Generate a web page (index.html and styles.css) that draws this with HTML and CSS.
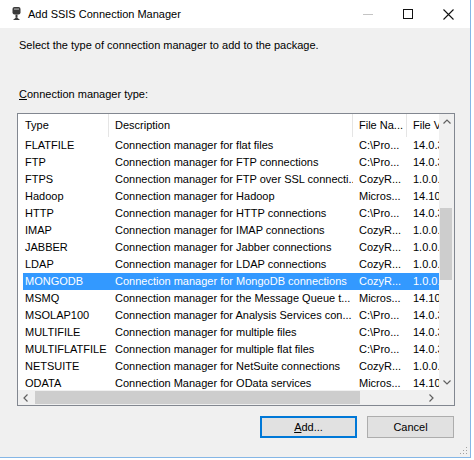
FILE: index.html
```html
<!DOCTYPE html>
<html>
<head>
<meta charset="utf-8">
<title>Add SSIS Connection Manager</title>
<link rel="stylesheet" href="styles.css">
</head>
<body>
<div class="window">
  <div class="titlebar">
    <svg class="app-icon" width="9" height="14" viewBox="0 0 9 14">
      <rect x="0.5" y="0" width="8" height="7.5" rx="2" fill="#3a3a3a"/>
      <rect x="2" y="1.5" width="5" height="1.2" fill="#a8a8a8"/>
      <rect x="3.5" y="7.5" width="2" height="3" fill="#3a3a3a"/>
      <path d="M1 13 L4.5 10 L8 13 Z" fill="#3a3a3a"/>
    </svg>
    <span class="title">Add SSIS Connection Manager</span>
    <div class="controls">
      <span class="ctl"><svg width="10" height="10" viewBox="0 0 10 10"><line x1="0" y1="5.5" x2="10" y2="5.5" stroke="#c4c4c4" stroke-width="1"/></svg></span>
      <span class="ctl"><svg width="10" height="10" viewBox="0 0 10 10"><rect x="0.5" y="0.5" width="9" height="9" fill="none" stroke="#111" stroke-width="1"/></svg></span>
      <span class="ctl"><svg width="11" height="11" viewBox="0 0 11 11"><path d="M0.5 0.5 L10.5 10.5 M10.5 0.5 L0.5 10.5" stroke="#111" stroke-width="1.1" fill="none"/></svg></span>
    </div>
  </div>
  <div class="client">
    <p class="intro">Select the type of connection manager to add to the package.</p>
    <p class="label"><u>C</u>onnection manager type:</p>
    <div class="listbox">
      <div class="listarea">
        <div class="row header">
          <div class="c">Type</div>
          <div class="c">Description</div>
          <div class="c">File Na...</div>
          <div class="c">File V</div>
        </div>
        <div class="row"><div class="c">FLATFILE</div><div class="c">Connection manager for flat files</div><div class="c">C:\Pro...</div><div class="c">14.0.3</div></div>
        <div class="row"><div class="c">FTP</div><div class="c">Connection manager for FTP connections</div><div class="c">C:\Pro...</div><div class="c">14.0.3</div></div>
        <div class="row"><div class="c">FTPS</div><div class="c">Connection manager for FTP over SSL connecti...</div><div class="c">CozyR...</div><div class="c">1.0.0.</div></div>
        <div class="row"><div class="c">Hadoop</div><div class="c">Connection manager for Hadoop</div><div class="c">Micros...</div><div class="c">14.10</div></div>
        <div class="row"><div class="c">HTTP</div><div class="c">Connection manager for HTTP connections</div><div class="c">C:\Pro...</div><div class="c">14.0.3</div></div>
        <div class="row"><div class="c">IMAP</div><div class="c">Connection manager for IMAP connections</div><div class="c">CozyR...</div><div class="c">1.0.0.</div></div>
        <div class="row"><div class="c">JABBER</div><div class="c">Connection manager for Jabber connections</div><div class="c">CozyR...</div><div class="c">1.0.0.</div></div>
        <div class="row"><div class="c">LDAP</div><div class="c">Connection manager for LDAP connections</div><div class="c">CozyR...</div><div class="c">1.0.0.</div></div>
        <div class="row selected"><div class="c">MONGODB</div><div class="c">Connection manager for MongoDB connections</div><div class="c">CozyR...</div><div class="c">1.0.0.</div></div>
        <div class="row"><div class="c">MSMQ</div><div class="c">Connection manager for the Message Queue t...</div><div class="c">Micros...</div><div class="c">14.10</div></div>
        <div class="row"><div class="c">MSOLAP100</div><div class="c">Connection manager for Analysis Services con...</div><div class="c">C:\Pro...</div><div class="c">14.0.3</div></div>
        <div class="row"><div class="c">MULTIFILE</div><div class="c">Connection manager for multiple files</div><div class="c">C:\Pro...</div><div class="c">14.0.3</div></div>
        <div class="row"><div class="c">MULTIFLATFILE</div><div class="c">Connection manager for multiple flat files</div><div class="c">C:\Pro...</div><div class="c">14.0.3</div></div>
        <div class="row"><div class="c">NETSUITE</div><div class="c">Connection manager for NetSuite connections</div><div class="c">CozyR...</div><div class="c">1.0.0.</div></div>
        <div class="row"><div class="c">ODATA</div><div class="c">Connection Manager for OData services</div><div class="c">Micros...</div><div class="c">14.10</div></div>
      </div>
      <div class="vscroll">
        <div class="sbtn"><svg width="8" height="5" viewBox="0 0 8 5"><path d="M0.5 4.5 L4 1 L7.5 4.5" fill="none" stroke="#606060" stroke-width="1.2"/></svg></div>
        <div class="vtrack"><div class="vthumb"></div></div>
        <div class="sbtn"><svg width="8" height="5" viewBox="0 0 8 5"><path d="M0.5 0.5 L4 4 L7.5 0.5" fill="none" stroke="#606060" stroke-width="1.2"/></svg></div>
      </div>
      <div class="hscroll">
        <div class="sbtn"><svg width="5" height="8" viewBox="0 0 5 8"><path d="M4.5 0.5 L1 4 L4.5 7.5" fill="none" stroke="#606060" stroke-width="1.2"/></svg></div>
        <div class="htrack"><div class="hthumb"></div></div>
        <div class="sbtn"><svg width="5" height="8" viewBox="0 0 5 8"><path d="M0.5 0.5 L4 4 L0.5 7.5" fill="none" stroke="#606060" stroke-width="1.2"/></svg></div>
      </div>
      <div class="corner"></div>
    </div>
    <div class="buttons">
      <button class="btn default"><u>A</u>dd...</button>
      <button class="btn">Cancel</button>
    </div>
  </div>
  <svg class="grip" width="8" height="8" viewBox="0 0 8 8">
    <rect x="6" y="0" width="1" height="1" fill="#a0a0a0"/>
    <rect x="3" y="3" width="1" height="1" fill="#a0a0a0"/>
    <rect x="6" y="3" width="1" height="1" fill="#a0a0a0"/>
    <rect x="0" y="6" width="1" height="1" fill="#a0a0a0"/>
    <rect x="3" y="6" width="1" height="1" fill="#a0a0a0"/>
    <rect x="6" y="6" width="1" height="1" fill="#a0a0a0"/>
  </svg>
</div>
</body>
</html>
```
FILE: styles.css
```css
html, body {
  margin: 0;
  padding: 0;
  background: #ffffff;
}
body {
  font-family: "Liberation Sans", Arial, sans-serif;
  font-size: 11px;
  color: #000;
  width: 474px;
  height: 460px;
  overflow: hidden;
}
.window {
  position: relative;
  width: 470px;
  height: 457px;
  border-right: 1px solid #84b6e6;
  border-bottom: 1px solid #84b6e6;
  background: #f0f0f0;
  display: flex;
  flex-direction: column;
}
.titlebar {
  flex: none;
  height: 28px;
  background: #ffffff;
  display: flex;
  align-items: center;
}
.app-icon {
  margin-left: 12px;
  flex: none;
}
.title {
  margin-left: 7px;
  font-size: 11px;
  line-height: 15px;
}
.controls {
  margin-left: auto;
  margin-right: 2px;
  display: flex;
  height: 28px;
}
.ctl {
  width: 40px;
  height: 28px;
  display: flex;
  align-items: center;
  justify-content: center;
}
.client {
  flex: 1;
  padding: 10px 15px 0 17px;
  display: flex;
  flex-direction: column;
}
.intro {
  margin: 0 0 0 2px;
  line-height: 15px;
}
.label {
  margin: 34px 0 0 2px;
  line-height: 15px;
}
.listbox {
  margin-top: 11px;
  width: 436px;
  height: 291px;
  border: 1px solid #828790;
  background: #ffffff;
  display: grid;
  grid-template-columns: 421px 15px;
  grid-template-rows: 276px 15px;
}
.listarea {
  overflow: hidden;
}
.row {
  display: grid;
  grid-template-columns: 91px 244px 54px 32px;
  height: 17px;
  line-height: 17px;
}
.row .c {
  padding-left: 6px;
  white-space: nowrap;
  overflow: hidden;
  text-overflow: clip;
}
.row .c:first-child {
  padding-left: 7px;
}
.header {
  height: 23px;
  line-height: 23px;
}
.header .c {
  border-right: 1px solid #e5e5e5;
}
.header .c:last-child {
  border-right: none;
}
.selected {
  background: linear-gradient(to right, transparent 5px, #3399ff 5px);
  color: #ffffff;
}
.vscroll {
  background: #f0f0f0;
  display: flex;
  flex-direction: column;
}
.sbtn {
  flex: none;
  width: 15px;
  height: 15px;
  display: flex;
  align-items: center;
  justify-content: center;
}
.vtrack {
  flex: 1;
  padding-top: 79px;
}
.vthumb {
  width: 12px;
  height: 72px;
  margin-left: 1px;
  background: #cdcdcd;
}
.hscroll {
  background: #f0f0f0;
  display: flex;
}
.htrack {
  flex: 1;
  padding: 1px 0 1px 2px;
}
.hthumb {
  width: 325px;
  height: 13px;
  background: #cdcdcd;
}
.corner {
  background: #f0f0f0;
}
.buttons {
  margin-top: 10px;
  width: 437px;
  display: flex;
  justify-content: flex-end;
  gap: 10px;
}
.btn {
  font-family: "Liberation Sans", Arial, sans-serif;
  font-size: 11px;
  color: #000;
  height: 22px;
  background: #e1e1e1;
  border: 1px solid #adadad;
  padding: 0;
  width: 87px;
}
.btn.default {
  width: 97px;
  border: 2px solid #0078d7;
}
.grip {
  position: absolute;
  right: 2px;
  bottom: 2px;
}
```
